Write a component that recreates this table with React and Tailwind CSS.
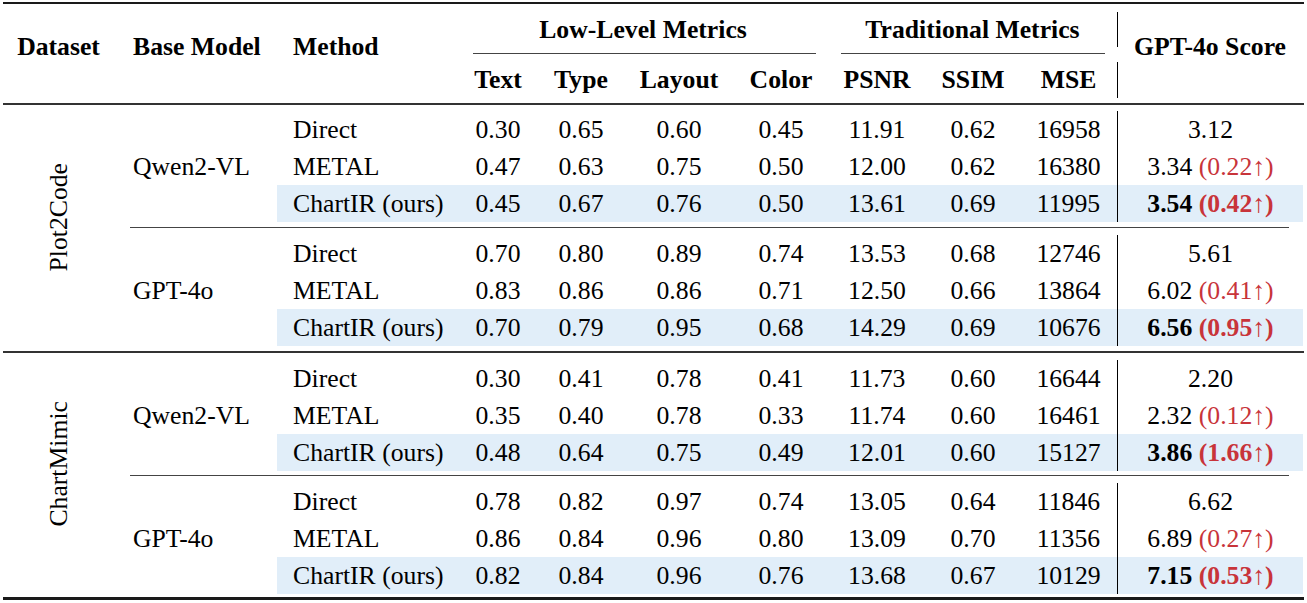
import React from "react";

const data = [
  {
    name: "Plot2Code",
    groups: [
      {
        model: "Qwen2-VL",
        rows: [
          ["Direct", "0.30", "0.65", "0.60", "0.45", "11.91", "0.62", "16958", ["3.12"]],
          ["METAL", "0.47", "0.63", "0.75", "0.50", "12.00", "0.62", "16380", ["3.34", "0.22"]],
          ["ChartIR (ours)", "0.45", "0.67", "0.76", "0.50", "13.61", "0.69", "11995", ["3.54", "0.42"]],
        ],
      },
      {
        model: "GPT-4o",
        rows: [
          ["Direct", "0.70", "0.80", "0.89", "0.74", "13.53", "0.68", "12746", ["5.61"]],
          ["METAL", "0.83", "0.86", "0.86", "0.71", "12.50", "0.66", "13864", ["6.02", "0.41"]],
          ["ChartIR (ours)", "0.70", "0.79", "0.95", "0.68", "14.29", "0.69", "10676", ["6.56", "0.95"]],
        ],
      },
    ],
  },
  {
    name: "ChartMimic",
    groups: [
      {
        model: "Qwen2-VL",
        rows: [
          ["Direct", "0.30", "0.41", "0.78", "0.41", "11.73", "0.60", "16644", ["2.20"]],
          ["METAL", "0.35", "0.40", "0.78", "0.33", "11.74", "0.60", "16461", ["2.32", "0.12"]],
          ["ChartIR (ours)", "0.48", "0.64", "0.75", "0.49", "12.01", "0.60", "15127", ["3.86", "1.66"]],
        ],
      },
      {
        model: "GPT-4o",
        rows: [
          ["Direct", "0.78", "0.82", "0.97", "0.74", "13.05", "0.64", "11846", ["6.62"]],
          ["METAL", "0.86", "0.84", "0.96", "0.80", "13.09", "0.70", "11356", ["6.89", "0.27"]],
          ["ChartIR (ours)", "0.82", "0.84", "0.96", "0.76", "13.68", "0.67", "10129", ["7.15", "0.53"]],
        ],
      },
    ],
  },
];

function Row({ r }) {
  const ours = r[0] === "ChartIR (ours)";
  const score = r[8];
  return (
    <div
      className={
        "grid grid-cols-[181px_80px_86px_110px_94px_98px_94px_97px_186px] h-[37px] items-center " +
        (ours ? "bg-[#e1eef9]" : "")
      }
    >
      <div className="pl-4">{r[0]}</div>
      {r.slice(1, 8).map((v, i) => (
        <div key={i} className="text-center">
          {v}
        </div>
      ))}
      <div className="self-stretch border-l border-black flex items-center justify-center">
        {score.length === 1 ? (
          <span>{score[0]}</span>
        ) : ours ? (
          <span className="font-bold">
            {score[0]} <span className="text-[#c8343a]">({score[1]}↑)</span>
          </span>
        ) : (
          <span>
            {score[0]} <span className="text-[#c8343a]">({score[1]}↑)</span>
          </span>
        )}
      </div>
    </div>
  );
}

function Group({ g, pad }) {
  return (
    <div className={pad}>
      <div className="flex">
        <div className="w-[163px] shrink-0 flex items-center pl-[19px]">{g.model}</div>
        <div className="flex flex-col">
          {g.rows.map((r, i) => (
            <Row key={i} r={r} />
          ))}
        </div>
      </div>
    </div>
  );
}

function Block({ b, idx }) {
  return (
    <div className="flex">
      <div className="w-[111px] shrink-0 flex items-center justify-center pb-[22px]">
        <span className="[writing-mode:vertical-rl] rotate-180 leading-none">{b.name}</span>
      </div>
      <div className="flex flex-col">
        <Group g={b.groups[0]} pad={idx === 0 ? "pt-[6px] pb-[5px]" : "pt-[7px] pb-[4px]"} />
        <div className="h-px bg-[#444] ml-[16px] mr-[14px]" />
        <Group g={b.groups[1]} pad={idx === 0 ? "pt-[7px] pb-[5px]" : "pt-[7px] pb-[3px]"} />
      </div>
    </div>
  );
}

export default function App() {
  return (
    <div className="w-[1307px] h-[603px] bg-white text-black font-['Liberation_Serif',serif] text-[25.7px] leading-none pt-[2px] px-[3px] overflow-hidden">
      <div className="h-[2px] bg-[#1a1a1a]" />
      {/* Header */}
      <div className="grid grid-cols-[111px_163px_181px_80px_86px_110px_94px_98px_94px_97px_186px] grid-rows-[8px_35px_6px_1px_8px_36px_5px] font-bold">
        <div className="col-start-1 row-start-1 row-end-8 flex items-center justify-center pb-[14px]">Dataset</div>
        <div className="col-start-2 row-start-1 row-end-8 flex items-center pl-[19px] pb-[14px]">Base Model</div>
        <div className="col-start-3 row-start-1 row-end-8 flex items-center pl-4 pb-[14px]">Method</div>
        <div className="col-start-4 col-end-8 row-start-2 flex items-center justify-center">Low-Level Metrics</div>
        <div className="col-start-8 col-end-11 row-start-2 flex items-center justify-center">Traditional Metrics</div>
        <div className="col-start-4 col-end-8 row-start-4 bg-[#444] ml-[15px] mr-[12px]" />
        <div className="col-start-8 col-end-11 row-start-4 bg-[#444] ml-[13px] mr-[12px]" />
        {["Text", "Type", "Layout", "Color", "PSNR", "SSIM", "MSE"].map((h, i) => (
          <div key={h} className="row-start-6 flex items-center justify-center" style={{ gridColumnStart: i + 4 }}>
            {h}
          </div>
        ))}
        <div className="col-start-11 row-start-2 w-px bg-black justify-self-start" />
        <div className="col-start-11 row-start-6 w-px bg-black justify-self-start" />
        <div className="col-start-11 row-start-1 row-end-8 flex items-center justify-center pb-[14px]">GPT-4o Score</div>
      </div>
      <div className="h-[2px] bg-[#333]" />
      <Block b={data[0]} idx={0} />
      <div className="h-[2px] bg-[#333]" />
      <Block b={data[1]} idx={1} />
      <div className="h-[3px] bg-[#1a1a1a]" />
    </div>
  );
}
